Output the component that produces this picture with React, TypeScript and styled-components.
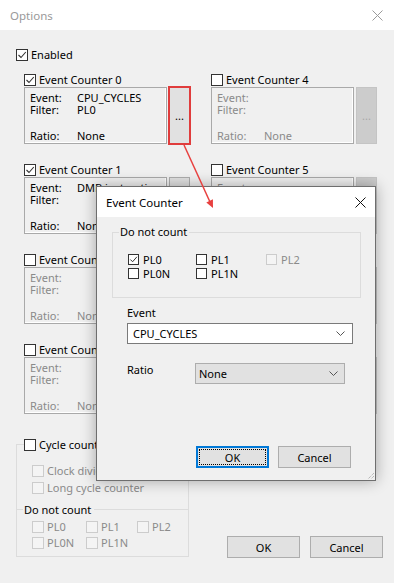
import styled, { createGlobalStyle } from "styled-components";

const GlobalStyle = createGlobalStyle`
  html, body {
    margin: 0;
    padding: 0;
    background: #f0f0f0;
  }
  body {
    font-family: "Noto Sans", "Open Sans", sans-serif;
    font-size: 11px;
    color: #000;
  }
`;

interface checkProps {
  checked?: boolean;
  disabled?: boolean;
  size?: number;
}

function Check({ checked, disabled, size = 12 }: checkProps) {
  return (
    <CheckBox $disabled={disabled} $size={size}>
      {checked && (
        <svg width={size - 2} height={size - 2} viewBox="0 0 10 10">
          <polyline
            points="1.5,5 4,7.5 8.8,2"
            fill="none"
            stroke="#333"
            strokeWidth="1.1"
          />
        </svg>
      )}
    </CheckBox>
  );
}

function CloseIcon({ color }: { color: string }) {
  return (
    <svg width="11" height="11" viewBox="0 0 11 11">
      <path d="M0.5 0.5 L10.5 10.5 M10.5 0.5 L0.5 10.5" stroke={color} strokeWidth="1" />
    </svg>
  );
}

function Chevron() {
  return (
    <svg width="9" height="5" viewBox="0 0 9 5">
      <polyline points="0.5,0.5 4.5,4.5 8.5,0.5" fill="none" stroke="#555" strokeWidth="1" />
    </svg>
  );
}

interface counter {
  name: string;
  checked?: boolean;
  event?: string;
  filter?: string;
  highlight?: boolean;
}

const counters: counter[] = [
  { name: "Event Counter 0", checked: true, event: "CPU_CYCLES", filter: "PL0", highlight: true },
  { name: "Event Counter 4" },
  { name: "Event Counter 1", checked: true, event: "DMB instructions" },
  { name: "Event Counter 5" },
  { name: "Event Counter 2" },
  { name: "Event Counter 6" },
  { name: "Event Counter 3" },
  { name: "Event Counter 7" },
];

function Counter({ name, checked, event, filter, highlight }: counter) {
  const off = !checked;
  return (
    <CounterBlock>
      <CheckRow>
        <Check checked={checked} />
        {name}
      </CheckRow>
      <CounterBody>
        <InfoBox $disabled={off}>
          <InfoRow>
            <span>Event:</span>
            <span>{event}</span>
          </InfoRow>
          <InfoRow>
            <span>Filter:</span>
            <span>{filter}</span>
          </InfoRow>
          <InfoRow $gap>
            <span>Ratio:</span>
            <span>None</span>
          </InfoRow>
        </InfoBox>
        <DotsButton disabled={off} $highlight={highlight}>
          ...
        </DotsButton>
      </CounterBody>
    </CounterBlock>
  );
}

export default function App() {
  return (
    <>
      <GlobalStyle />
      <Window>
        <TitleBar>
          <span>Options</span>
          <CloseIcon color="#9a9a9a" />
        </TitleBar>

        <Body>
          <CheckRow>
            <Check checked />
            Enabled
          </CheckRow>

          <CounterGrid>
            {counters.map((c) => (
              <Counter key={c.name} {...c} />
            ))}
          </CounterGrid>

          <BottomRow>
            <Frame>
              <Legend>
                <CheckRow>
                  <Check />
                  Cycle counter
                </CheckRow>
              </Legend>
              <FrameContent>
                <CheckRow $disabled>
                  <Check disabled />
                  Clock divider
                </CheckRow>
                <CheckRow $disabled style={{ marginTop: 2 }}>
                  <Check disabled />
                  Long cycle counter
                </CheckRow>
              </FrameContent>
              <SubHeading>Do not count</SubHeading>
              <PlGrid>
                {["PL0", "PL1", "PL2", "PL0N", "PL1N"].map((p) => (
                  <CheckRow key={p} $disabled>
                    <Check disabled />
                    {p}
                  </CheckRow>
                ))}
              </PlGrid>
            </Frame>

            <ButtonRow>
              <Button>OK</Button>
              <Button>Cancel</Button>
            </ButtonRow>
          </BottomRow>
        </Body>

        <Dialog>
          <DlgTitle>
            <span>Event Counter</span>
            <CloseIcon color="#111" />
          </DlgTitle>
          <DlgBody>
            <DlgFrame>
              <DlgLegend>Do not count</DlgLegend>
              <DlgGrid>
                <CheckRow $small>
                  <Check checked size={11} />
                  PL0
                </CheckRow>
                <CheckRow $small>
                  <Check size={11} />
                  PL1
                </CheckRow>
                <CheckRow $small $disabled>
                  <Check disabled size={11} />
                  PL2
                </CheckRow>
                <CheckRow $small>
                  <Check size={11} />
                  PL0N
                </CheckRow>
                <CheckRow $small>
                  <Check size={11} />
                  PL1N
                </CheckRow>
              </DlgGrid>
            </DlgFrame>

            <FieldLabel>Event</FieldLabel>
            <Combo $editable>
              <span>CPU_CYCLES</span>
              <Chevron />
            </Combo>

            <RatioRow>
              <span>Ratio</span>
              <Combo>
                <span>None</span>
                <Chevron />
              </Combo>
            </RatioRow>

            <DlgButtons>
              <Button $default>OK</Button>
              <Button>Cancel</Button>
            </DlgButtons>
          </DlgBody>
          <Grip width="10" height="10" viewBox="0 0 10 10">
            <path d="M9 3 L3 9 M9 6 L6 9" stroke="#a0a0a0" strokeWidth="1" strokeDasharray="1 1" />
          </Grip>
        </Dialog>

        <Arrow width="394" height="583" viewBox="0 0 394 583">
          <line x1="184" y1="145" x2="210" y2="202" stroke="#e8403f" strokeWidth="1.5" />
          <polygon points="213,208 206.3,202.4 212.9,199.2" fill="#e8403f" />
        </Arrow>
      </Window>
    </>
  );
}

const Window = styled.div`
  position: relative;
  width: 394px;
  height: 583px;
  overflow: hidden;
  background: #f0f0f0;
`;

const TitleBar = styled.div`
  height: 30px;
  background: #fff;
  display: flex;
  align-items: center;
  justify-content: space-between;
  padding: 0 11px 0 10px;
  box-sizing: border-box;
  font-size: 11.5px;
  color: #999;
`;

const Body = styled.div`
  padding: 17px 0 0 16px;
`;

const CheckRow = styled.label<{ $disabled?: boolean; $small?: boolean }>`
  display: flex;
  align-items: center;
  gap: ${({ $small }) => ($small ? "4px" : "3px")};
  height: ${({ $small }) => ($small ? "14px" : "15px")};
  white-space: nowrap;
  color: ${({ $disabled }) => ($disabled ? "#8a8a8a" : "#000")};
`;

const CheckBox = styled.span<{ $disabled?: boolean; $size: number }>`
  display: inline-flex;
  align-items: center;
  justify-content: center;
  flex: none;
  width: ${({ $size }) => $size}px;
  height: ${({ $size }) => $size}px;
  box-sizing: border-box;
  border: 1px solid ${({ $disabled }) => ($disabled ? "#cccccc" : "#333")};
  background: ${({ $disabled }) => ($disabled ? "#f4f4f4" : "#fff")};
`;

const CounterGrid = styled.div`
  display: grid;
  grid-template-columns: 166px 166px;
  column-gap: 21px;
  row-gap: 18px;
  margin: 10px 0 0 8px;
`;

const CounterBlock = styled.div`
  display: flex;
  flex-direction: column;
`;

const CounterBody = styled.div`
  display: flex;
  gap: 2px;
`;

const InfoBox = styled.div<{ $disabled?: boolean }>`
  width: 143px;
  height: 57px;
  box-sizing: border-box;
  border: 1px solid #a9a9a9;
  box-shadow: inset -1px -1px 0 #fff;
  padding: 4px 0 0 5px;
  color: ${({ $disabled }) => ($disabled ? "#8a8a8a" : "#000")};
`;

const InfoRow = styled.div<{ $gap?: boolean }>`
  display: grid;
  grid-template-columns: 47px 1fr;
  line-height: 12px;
  height: 12px;
  white-space: nowrap;
  margin-top: ${({ $gap }) => ($gap ? "14px" : "0")};
`;

const DotsButton = styled.button<{ $highlight?: boolean }>`
  width: 21px;
  height: 57px;
  padding: 0;
  font-family: inherit;
  font-size: 11px;
  background: ${({ disabled }) => (disabled ? "#cccccc" : "#e1e1e1")};
  color: ${({ disabled }) => (disabled ? "#a8a8a8" : "#000")};
  border: 1px solid ${({ disabled }) => (disabled ? "#c4c4c4" : "#adadad")};
  outline: ${({ $highlight }) => ($highlight ? "2px solid #e03c3c" : "none")};
  outline-offset: -1px;
`;

const BottomRow = styled.div`
  display: flex;
  align-items: flex-end;
  margin-top: 30px;
`;

const Frame = styled.div`
  width: 173px;
  box-sizing: border-box;
  border: 1px solid #dcdcdc;
  padding-bottom: 6px;
`;

const Legend = styled.div`
  margin: -8px 0 0 7px;
  padding-right: 2px;
  width: fit-content;
  background: #f0f0f0;
`;

const FrameContent = styled.div`
  padding-left: 15px;
  margin-top: 11px;
`;

const SubHeading = styled.div`
  display: flex;
  align-items: center;
  height: 14px;
  margin-top: 7px;
  color: #000;

  &::before {
    content: "";
    width: 6px;
    height: 1px;
    background: #dcdcdc;
    margin-right: 1px;
  }
  &::after {
    content: "";
    flex: 1;
    height: 1px;
    background: #dcdcdc;
    margin-left: 3px;
  }
`;

const PlGrid = styled.div`
  display: grid;
  grid-template-columns: 54px 51px auto;
  row-gap: 1px;
  padding-left: 15px;
  margin-top: 3px;
`;

const ButtonRow = styled.div`
  display: flex;
  gap: 10px;
  margin: 0 11px -1px auto;
`;

const Button = styled.button<{ $default?: boolean }>`
  width: 73px;
  height: 22px;
  padding: 0;
  font-family: inherit;
  font-size: 11px;
  color: #000;
  background: #e1e1e1;
  border: 1px solid ${({ $default }) => ($default ? "#0078d7" : "#adadad")};
  box-shadow: ${({ $default }) => ($default ? "inset 0 0 0 1px #0078d7" : "none")};
  outline: ${({ $default }) => ($default ? "1px dotted #000" : "none")};
  outline-offset: -4px;
`;

const Dialog = styled.div`
  position: absolute;
  left: 96px;
  top: 186px;
  width: 280px;
  height: 295px;
  box-sizing: border-box;
  border: 1px solid #6e6e6e;
  background: #f0f0f0;
  box-shadow: 0 0 14px rgba(0, 0, 0, 0.32);
  display: flex;
  flex-direction: column;
`;

const DlgTitle = styled.div`
  height: 30px;
  flex: none;
  background: #fff;
  display: flex;
  align-items: center;
  justify-content: space-between;
  padding: 0 9px 0 9px;
  font-size: 11.5px;
`;

const DlgBody = styled.div`
  flex: 1;
  display: flex;
  flex-direction: column;
  padding: 15px 14px 12px 15px;
`;

const DlgFrame = styled.div`
  height: 66px;
  box-sizing: border-box;
  border: 1px solid #dcdcdc;
`;

const DlgLegend = styled.div`
  margin: -8px 0 0 6px;
  padding: 0 2px 0 1px;
  width: fit-content;
  line-height: 14px;
  background: #f0f0f0;
`;

const DlgGrid = styled.div`
  display: grid;
  grid-template-columns: 68px 70px auto;
  padding-left: 15px;
  margin-top: 13px;
`;

const FieldLabel = styled.div`
  margin: 8px 0 0 15px;
  line-height: 14px;
`;

const Combo = styled.div<{ $editable?: boolean }>`
  height: 21px;
  box-sizing: border-box;
  display: flex;
  align-items: center;
  justify-content: space-between;
  background: ${({ $editable }) => ($editable ? "#fff" : "#e1e1e1")};
  border: 1px solid ${({ $editable }) => ($editable ? "#7a7a7a" : "#adadad")};
  padding: ${({ $editable }) => ($editable ? "0 7px 0 5px" : "0 6px 0 3px")};
  margin: ${({ $editable }) => ($editable ? "3px 8px 0 15px" : "0")};
  width: ${({ $editable }) => ($editable ? "auto" : "150px")};
`;

const RatioRow = styled.div`
  display: flex;
  align-items: flex-start;
  margin: 19px 0 0 15px;

  & > span {
    width: 68px;
    line-height: 14px;
  }
`;

const DlgButtons = styled.div`
  display: flex;
  justify-content: flex-end;
  gap: 9px;
  margin: auto 10px 0 0;
`;

const Grip = styled.svg`
  position: absolute;
  right: 0;
  bottom: 0;
`;

const Arrow = styled.svg`
  position: absolute;
  left: 0;
  top: 0;
  pointer-events: none;
`;
